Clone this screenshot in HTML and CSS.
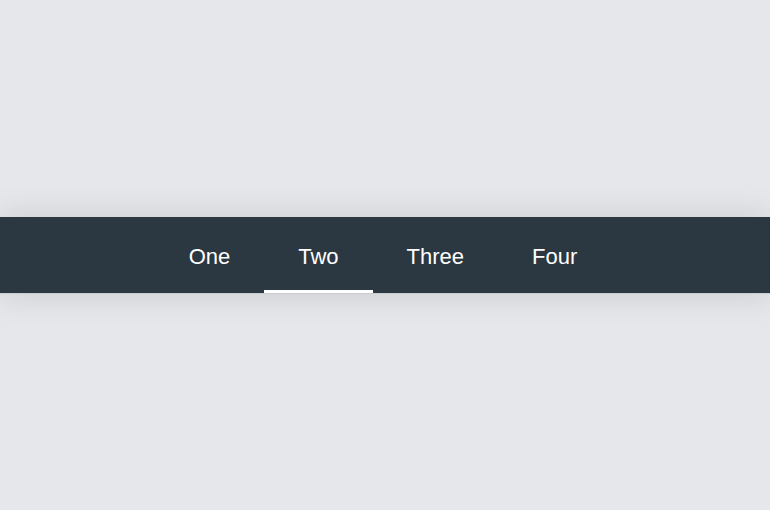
FILE: index.html
```html
<!DOCTYPE html>
<html>
<head>
<meta charset="utf-8">
<link rel="stylesheet" href="styles.css">
</head>
<body>
<div class="page">
  <nav class="tabbar">
    <ul class="tabs">
      <li class="tab">One</li>
      <li class="tab active">Two</li>
      <li class="tab">Three</li>
      <li class="tab">Four</li>
    </ul>
  </nav>
</div>
</body>
</html>
```
FILE: styles.css
```css
html, body {
  margin: 0;
  padding: 0;
  background: #e6e7ea;
  height: 100%;
}
.page {
  padding-top: 217px;
}
.tabbar {
  background: #2c3841;
  height: 76px;
  border-bottom: 1px solid #c9ccd1;
  box-shadow: 0 0 34px rgba(0, 0, 0, 0.13);
  display: flex;
  justify-content: center;
}
.tabs {
  list-style: none;
  margin: 0 0 0 -4px;
  padding: 0;
  display: flex;
  height: 100%;
}
.tab {
  font-family: "Liberation Sans", Arial, sans-serif;
  font-size: 22px;
  color: #ffffff;
  padding: 3px 34px 0;
  display: flex;
  align-items: center;
  box-sizing: border-box;
  height: 100%;
}
.tab.active {
  box-shadow: inset 0 -3px 0 #ffffff;
}
```
